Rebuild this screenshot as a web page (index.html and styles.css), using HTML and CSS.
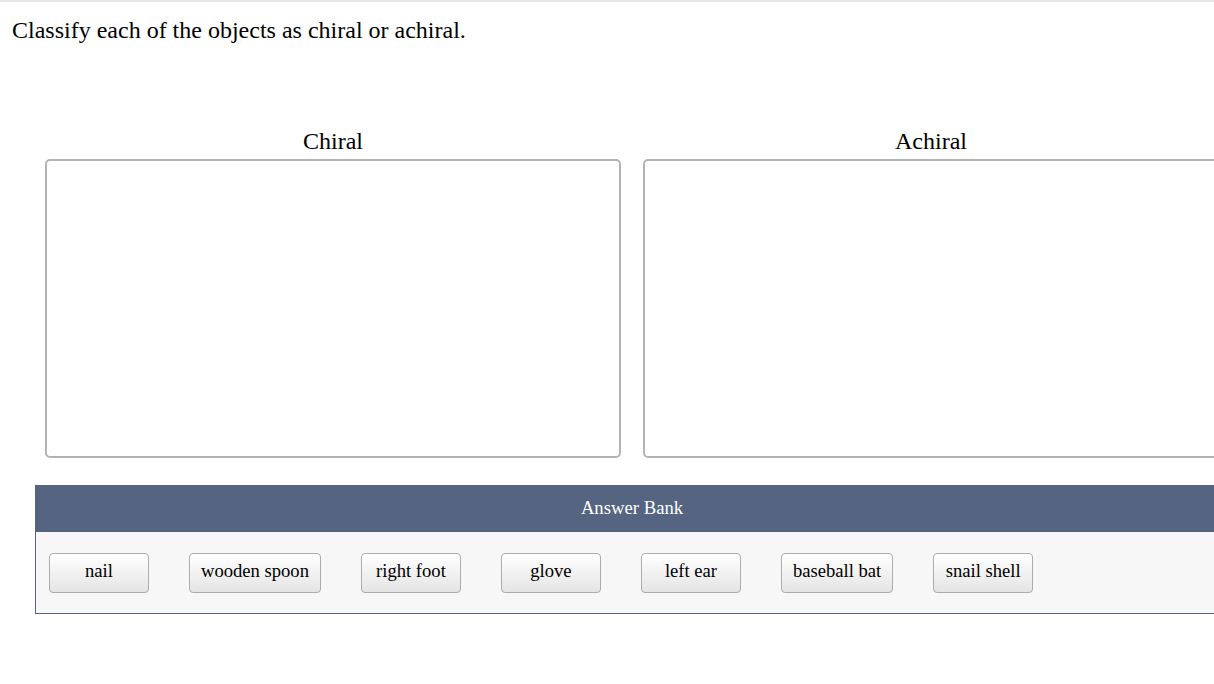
FILE: index.html
```html
<!DOCTYPE html>
<html lang="en">
<head>
  <meta charset="UTF-8">
  <title>Classify chiral or achiral</title>
  <link rel="stylesheet" href="styles.css">
</head>
<body>

<div class="page">
  <p class="question">Classify each of the objects as chiral or achiral.</p>

  <!-- Drop targets -->
  <div class="bins">
    <div class="bin">
      <div class="bin-label">Chiral</div>
      <div class="bin-box"></div>
    </div>
    <div class="bin">
      <div class="bin-label">Achiral</div>
      <div class="bin-box"></div>
    </div>
  </div>

  <!-- Answer bank -->
  <div class="bank">
    <div class="bank-head">Answer Bank</div>
    <div class="bank-body">
      <div class="chip">nail</div>
      <div class="chip">wooden spoon</div>
      <div class="chip">right foot</div>
      <div class="chip">glove</div>
      <div class="chip">left ear</div>
      <div class="chip">baseball bat</div>
      <div class="chip">snail shell</div>
    </div>
  </div>
</div>

</body>
</html>
```

FILE: styles.css
```css
body {
  margin: 0;
  font-family: 'Liberation Serif', 'Times New Roman', serif;
  color: #000;
  background: #fff;
  overflow: hidden;
}
.page {
  border-top: 2px solid #e8e8e8;
  width: 1240px;
}
.question {
  margin: 0;
  padding: 14px 12px 0 12px;
  font-size: 24px;
  line-height: 28px;
}
.bins {
  display: flex;
  gap: 22px;
  margin: 83px 0 0 45px;
}
.bin {
  flex: 0 0 576px;
}
.bin-label {
  text-align: center;
  font-size: 24px;
  line-height: 28px;
  margin-bottom: 4px;
}
.bin-box {
  height: 295px;
  border: 2px solid #b3b3b3;
  border-radius: 5px;
  background: #fff;
}
.bank {
  margin: 27px 0 0 35px;
  width: 1194px;
}
.bank-head {
  background: #556480;
  color: #fff;
  height: 47px;
  line-height: 46px;
  text-align: center;
  font-size: 18.7px;
}
.bank-body {
  display: flex;
  gap: 40px;
  background: #f7f7f7;
  border-left: 1px solid #556480;
  border-bottom: 1px solid #556480;
  padding: 21px 13px 20px 13px;
}
.chip {
  box-sizing: border-box;
  min-width: 100px;
  height: 40px;
  line-height: 33px;
  padding: 0 11px;
  text-align: center;
  font-size: 18.6px;
  border: 1px solid #acacac;
  border-radius: 4px;
  background: linear-gradient(to bottom, #ffffff, #e4e4e4);
}
```
